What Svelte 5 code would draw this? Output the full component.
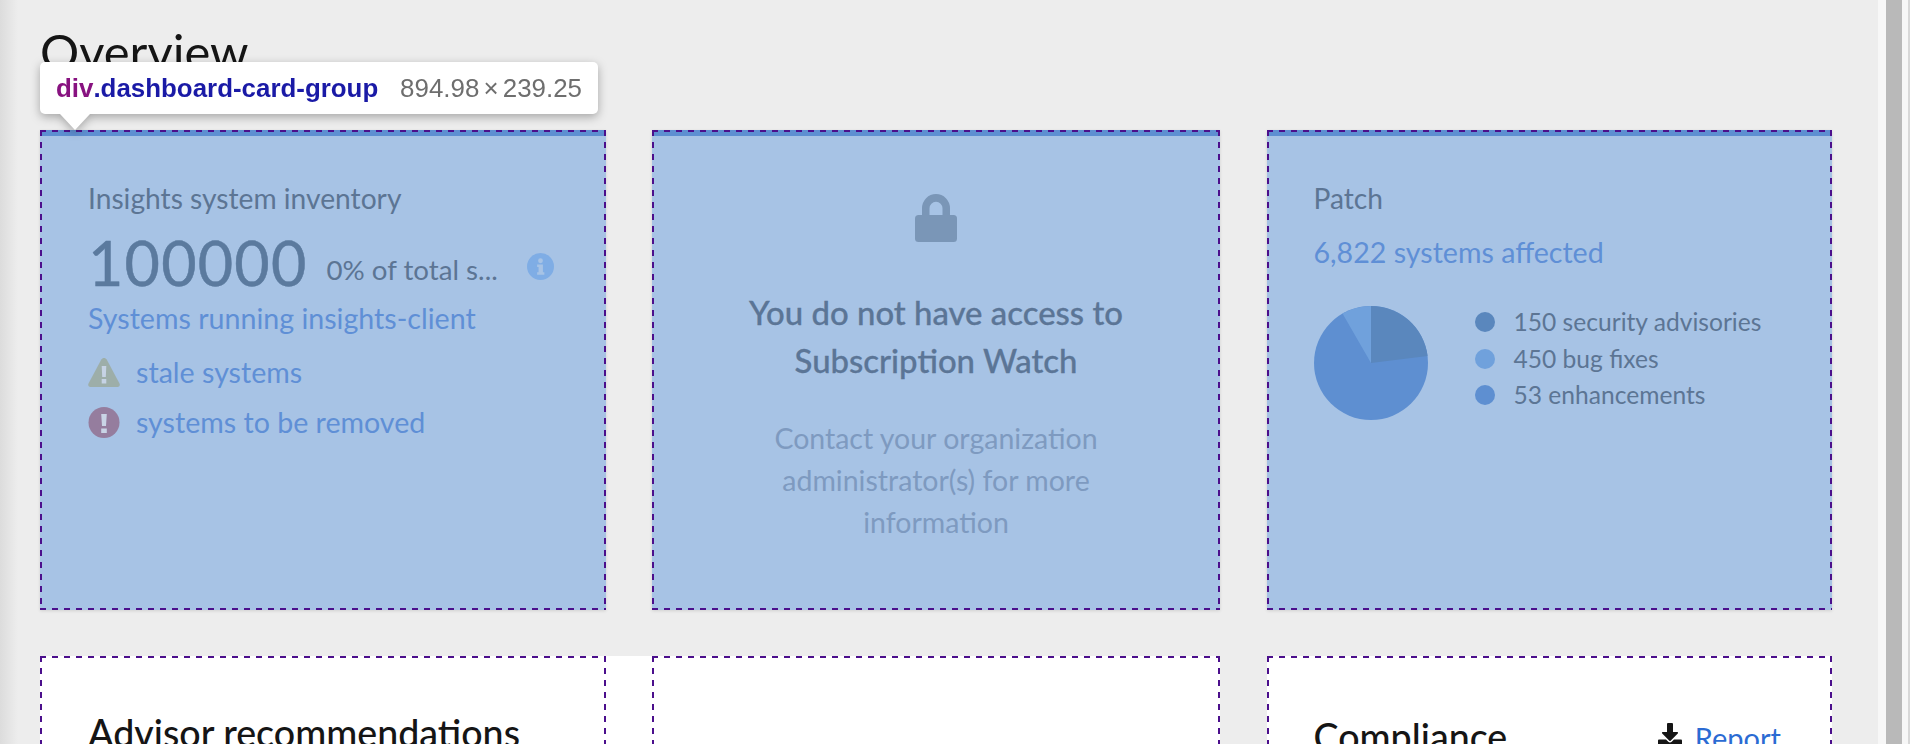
<script>
  const legend = [
    { label: '150 security advisories', color: '#5a87bd' },
    { label: '450 bug fixes', color: '#70a1dc' },
    { label: '53 enhancements', color: '#5e8fd1' }
  ];
</script>

<div class="page">
  <main class="main">
    <h1>Overview</h1>
    <div class="row top">
      <section class="card hl first">
        <h2 class="ctitle">Insights system inventory</h2>
        <div class="count">
          <span class="big">100000</span>
          <span class="pct">0% of total s...</span>
          <svg class="info" viewBox="0 0 28 28"><circle cx="14" cy="14" r="14" fill="#7fade5"/><path d="M11.500 8a2.500 2.500 0 1 1 5 0 2.500 2.500 0 0 1-5 0zM10.500 12h6v8h1.500v2.500h-7.500V20h1.500v-5.500h-1.500z" fill="#a7c3e5"/></svg>
        </div>
        <div class="link">Systems running insights-client</div>
        <div class="status">
          <svg viewBox="0 0 32 31"><path d="M16 1c1.200 0 2.100.6 2.700 1.600l12.800 24c.8 1.600 0 3.400-1.900 3.400H2.400C.5 30-.3 28.200.5 26.600l12.800-24C13.900 1.600 14.800 1 16 1z" fill="#9daea9"/><path d="M13.700 9h4.600l-.5 11h-3.600zM13.700 22h4.600v4.500h-4.600z" fill="#c6d3e5"/></svg>
          <span class="link">stale systems</span>
        </div>
        <div class="status">
          <svg viewBox="0 0 32 31"><ellipse cx="16" cy="15.500" rx="15.500" ry="15.500" fill="#957d9e"/><path d="M13.200 7h5.600l-.8 12h-4zM13.200 21.500h5.600v4.500h-5.600z" fill="#c9d4e6"/></svg>
          <span class="link">systems to be removed</span>
        </div>
      </section>

      <section class="card hl center">
        <svg class="lock" viewBox="0 0 42 48"><path d="M7 21V14.300a14 14.300 0 0 1 28 0V21h-7.500V14.300a6.500 6.500 0 0 0-13 0V21z" fill="#7a96b7"/><rect x="0" y="21" width="42" height="27" rx="3.500" fill="#7a96b7"/></svg>
        <h2 class="atitle">You do not have access to<br />Subscription Watch</h2>
        <p class="abody">Contact your organization<br />administrator(s) for more<br />information</p>
      </section>

      <section class="card hl">
        <h2 class="ctitle">Patch</h2>
        <div class="link affected">6,822 systems affected</div>
        <div class="chart">
          <svg class="pie" viewBox="0 0 114 114">
            <circle cx="57" cy="57" r="57" fill="#5e8fd1"/>
            <path d="M57 57 28.500 7.600A57 57 0 0 1 57 0z" fill="#70a1dc"/>
            <path d="M57 57V0a57 57 0 0 1 56.600 50.100z" fill="#5a87bd"/>
          </svg>
          <ul class="legend">
            {#each legend as item}
              <li><i class="dot" style:background={item.color}></i>{item.label}</li>
            {/each}
          </ul>
        </div>
      </section>
    </div>

    <div class="row bottom">
      <div class="group">
        <section class="card white first"><h2 class="wtitle">Advisor recommendations</h2></section>
        <section class="card white"></section>
      </div>
      <section class="card white comp">
        <h2 class="wtitle">Compliance</h2>
        <span class="report">
          <svg viewBox="0 0 512 512"><path d="M216 0h80c13.300 0 24 10.700 24 24v168h87.700c17.800 0 26.700 21.500 14.100 34.100L269.700 378.300c-7.500 7.500-19.800 7.500-27.300 0L90.100 226.100c-12.600-12.600-3.700-34.100 14.100-34.100H192V24c0-13.300 10.700-24 24-24zm296 376v112c0 13.300-10.700 24-24 24H24c-13.300 0-24-10.700-24-24V376c0-13.300 10.700-24 24-24h146.700l49 49c20.100 20.100 52.500 20.100 72.600 0l49-49H488c13.300 0 24 10.700 24 24z" fill="#151515"/></svg>
          <span>Report</span>
        </span>
      </section>
    </div>

    <div class="tip">
      <span class="tag">div</span><span class="cls">.dashboard-card-group</span>
      <span class="dim">894.98 × 239.25</span>
    </div>
  </main>
  <div class="rail"><div class="thumb"></div></div>
</div>

<style>
  :global(body) {
    margin: 0;
    background: #ededed;
  }
  .page {
    display: flex;
    width: 1910px;
    height: 744px;
    overflow: hidden;
    font-family: Lato, "Noto Sans", sans-serif;
    color: #151515;
    background: linear-gradient(90deg, #dcdcdc 0, #ededed 18px);
  }
  .main {
    position: relative;
    flex: none;
    width: 1878px;
    box-sizing: border-box;
    padding: 0 0 0 40px;
  }
  h1 {
    margin: 0;
    padding-top: 21px;
    height: 130px;
    box-sizing: border-box;
    font-size: 49px;
    line-height: 60px;
    font-weight: 400;
  }
  h2, p, ul { margin: 0; padding: 0; }
  .row {
    display: grid;
    grid-template-columns: 1180px 565.500px;
    column-gap: 46.500px;
  }
  .row.top {
    grid-template-columns: 565.500px 568px 565.500px;
    column-gap: 46.500px;
    height: 480px;
  }
  .row.bottom { margin-top: 46px; }
  .group {
    display: grid;
    grid-template-columns: 565.500px 568px;
    column-gap: 46.500px;
    background: #fff;
  }
  .card {
    --dash-h: repeating-linear-gradient(90deg, #4b0f8c 0 6px, transparent 6px 12px);
    --dash-v: repeating-linear-gradient(180deg, #4b0f8c 0 6px, transparent 6px 12px);
    box-sizing: border-box;
    padding: 55px 47px 0;
    min-width: 0;
    background-repeat: no-repeat;
    background-size: 100% 2px, 100% 2px, 2px 100%, 2px 100%, 100% 100%;
    background-position: top left, bottom left, top left, top right, top left;
  }
  .first { padding-left: 48px; }
  .hl {
    background-image: var(--dash-h), var(--dash-h), var(--dash-v), var(--dash-v),
      linear-gradient(#5e8fd1 0 6px, #a7c3e5 6px);
    box-shadow: 0 1px 3px rgba(0, 0, 0, .12);
  }
  .white {
    height: 130px;
    background-color: #fff;
    background-image: var(--dash-h), var(--dash-h), var(--dash-v), var(--dash-v);
  }
  .ctitle {
    font-size: 28.200px;
    line-height: 26px;
    font-weight: 400;
    color: #5c7594;
    white-space: nowrap;
  }
  .count {
    display: flex;
    align-items: center;
    margin: 19.500px 0 6.500px;
    padding-right: 4.500px;
    height: 64px;
    color: #5b7a9e;
    white-space: nowrap;
  }
  .big { font-size: 61px; line-height: 64px; letter-spacing: 1.200px; -webkit-text-stroke: .5px #5b7a9e; }
  .pct { margin: 14px 0 0 19px; font-size: 27.700px; line-height: 30px; color: #5c7594; }
  .info { width: 27px; height: 27px; margin: 7px 0 0 auto; flex: none; }
  .link { font-size: 28.600px; line-height: 34px; color: #5f8fd6; white-space: nowrap; }
  .status {
    display: flex;
    align-items: center;
    gap: 16px;
    margin-top: 22px;
    height: 31px;
  }
  .status .link { margin-bottom: 2px; }
  .status svg { width: 32px; height: 31px; flex: none; }
  .status + .status { margin-top: 19px; }
  .center { text-align: center; padding: 64px 30px 0; }
  .lock { display: block; width: 42px; height: 48px; margin: 0 auto; }
  .atitle {
    margin-top: 47px;
    font-size: 32.900px;
    line-height: 48px;
    font-weight: 500;
    color: #5b7596;
    -webkit-text-stroke: .3px #5b7596;
  }
  .abody {
    margin-top: 32px;
    font-size: 28.500px;
    line-height: 42px;
    color: #7e9ac0;
  }
  .affected { margin-top: 24px; }
  .chart { display: flex; align-items: flex-start; margin-top: 37px; }
  .pie { width: 114px; height: 114px; flex: none; }
  .legend {
    list-style: none;
    margin: -2px 0 0 47px;
    font-size: 24.600px;
    line-height: 36.500px;
    color: #5c7594;
    white-space: nowrap;
  }
  .legend li { display: flex; align-items: center; }
  .dot { width: 20px; height: 20px; border-radius: 50%; margin-right: 19px; flex: none; }
  .wtitle {
    font-size: 37.600px;
    line-height: 44px;
    font-weight: 500;
    color: #151515;
    white-space: nowrap;
  }
  .comp {
    display: flex;
    justify-content: space-between;
    padding: 59px 51px 0 47px;
  }
  .report {
    display: flex;
    gap: 13px;
    margin-top: 3px;
    font-size: 29px;
    line-height: 40px;
    color: #2b6bd3;
  }
  .report svg { width: 24px; height: 24px; margin-top: 5px; }
  .tip {
    position: absolute;
    left: 40px;
    top: 62px;
    width: 558px;
    height: 52px;
    box-sizing: border-box;
    padding: 0 16px;
    display: flex;
    align-items: center;
    background: #fff;
    border-radius: 5px;
    filter: drop-shadow(0 3px 5px rgba(0, 0, 0, .3));
    font-family: "Liberation Sans", Arial, sans-serif;
    font-size: 25.900px;
    white-space: nowrap;
  }
  .tip::after {
    content: "";
    position: absolute;
    left: 20px;
    top: 52px;
    width: 0;
    height: 0;
    border-left: 15px solid transparent;
    border-right: 15px solid transparent;
    border-top: 16px solid #fff;
  }
  .tag { color: #881280; font-weight: 700; }
  .cls { color: #1a1aa6; font-weight: 700; }
  .dim { color: #6e6e6e; margin-left: auto; word-spacing: -3px; }
  .rail {
    flex: none;
    width: 32px;
    box-sizing: border-box;
    padding-left: 8px;
    background: #f7f7f7;
    border-right: 2px solid #d8d8d8;
  }
  .thumb { width: 16px; height: 100%; background: #b9b9b9; }
</style>
